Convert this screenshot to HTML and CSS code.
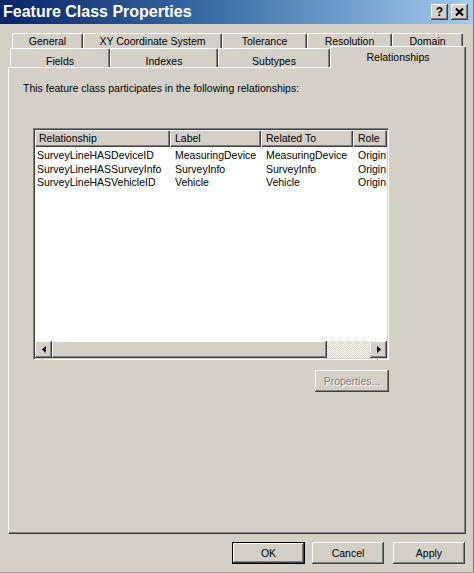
FILE: index.html
```html
<!DOCTYPE html>
<html>
<head>
<meta charset="utf-8">
<link rel="stylesheet" href="styles.css">
</head>
<body>
<div class="window">
  <div class="titlebar">
    <span class="title">Feature Class Properties</span>
    <div class="tbtns">
      <span class="tbtn help">?</span>
      <span class="tbtn close"><svg width="9" height="8" viewBox="0 0 9 8"><path d="M1 0.5 L8 7.5 M8 0.5 L1 7.5" stroke="#000" stroke-width="2" fill="none"/></svg></span>
    </div>
  </div>
  <div class="tabs">
    <div class="tabrow row1">
      <div class="tab t-general">General</div>
      <div class="tab t-xy">XY Coordinate System</div>
      <div class="tab t-tol">Tolerance</div>
      <div class="tab t-res">Resolution</div>
      <div class="tab t-dom">Domain</div>
    </div>
    <div class="tabrow row2">
      <div class="tab front t-fields">Fields</div>
      <div class="tab front t-idx">Indexes</div>
      <div class="tab front t-sub">Subtypes</div>
      <div class="tab selected t-rel">Relationships</div>
    </div>
  </div>
  <div class="panel">
    <p class="intro">This feature class participates in the following relationships:</p>
    <div class="listwrap">
      <div class="listview">
        <div class="lv-head">
          <div class="hcell c1">Relationship</div>
          <div class="hcell c2">Label</div>
          <div class="hcell c3">Related To</div>
          <div class="hcell c4">Role</div>
        </div>
        <div class="lv-body">
          <div class="lv-row">
            <div class="cell c1">SurveyLineHASDeviceID</div>
            <div class="cell c2">MeasuringDevice</div>
            <div class="cell c3">MeasuringDevice</div>
            <div class="cell c4">Origin</div>
          </div>
          <div class="lv-row">
            <div class="cell c1">SurveyLineHASSurveyInfo</div>
            <div class="cell c2">SurveyInfo</div>
            <div class="cell c3">SurveyInfo</div>
            <div class="cell c4">Origin</div>
          </div>
          <div class="lv-row">
            <div class="cell c1">SurveyLineHASVehicleID</div>
            <div class="cell c2">Vehicle</div>
            <div class="cell c3">Vehicle</div>
            <div class="cell c4">Origin</div>
          </div>
        </div>
        <div class="hscroll">
          <div class="sbtn"><svg width="4" height="7" viewBox="0 0 4 7"><path d="M4 0 L0 3.5 L4 7 Z" fill="#000"/></svg></div>
          <div class="thumb"></div>
          <div class="track"></div>
          <div class="sbtn"><svg width="4" height="7" viewBox="0 0 4 7"><path d="M0 0 L4 3.5 L0 7 Z" fill="#000"/></svg></div>
        </div>
      </div>
      <div class="props-row">
        <div class="btn disabled props">Properties...</div>
      </div>
    </div>
  </div>
  <div class="footer">
    <div class="btn default ok">OK</div>
    <div class="btn cancel">Cancel</div>
    <div class="btn apply">Apply</div>
  </div>
</div>
</body>
</html>
```
FILE: styles.css
```css
* { box-sizing: border-box; }
html, body { margin: 0; padding: 0; }
body {
  background: #d4d0c8;
  font-family: "Liberation Sans", Arial, sans-serif;
  font-size: 10.5px;
  color: #000;
}
.window {
  width: 474px;
  height: 573px;
  background: #d4d0c8;
  overflow: hidden;
  display: flex;
  flex-direction: column;
  border-right: 1px solid #808080;
  border-bottom: 1px solid #a0a0a0;
}
.titlebar {
  height: 24px;
  flex: none;
  background: linear-gradient(to right, #0a246a 0%, #3a6ea5 45%, #a6caf0 100%);
  display: flex;
  align-items: center;
  justify-content: space-between;
  padding: 0 5px 0 3px;
}
.title {
  color: #fff;
  font-weight: bold;
  font-size: 16px;
  line-height: 20px;
}
.tbtns { display: flex; gap: 3px; }
.tbtn {
  width: 17px;
  height: 16px;
  background: #d4d0c8;
  box-shadow: inset -1px -1px #404040, inset 1px 1px #fff, inset -2px -2px #808080;
  display: flex;
  align-items: center;
  justify-content: center;
  font-weight: bold;
  font-size: 12px;
  line-height: 16px;
}
.tabs {
  margin-top: 9px;
  flex: none;
}
.tabrow { display: flex; }
.row1 { height: 15px; padding-left: 12px; }
.row2 {
  height: 20px;
  padding-left: 10px;
  align-items: flex-end;
  margin-bottom: -1px;
}
.tab {
  background: #d4d0c8;
  border-top: 1px solid #fff;
  border-left: 1px solid #fff;
  border-right: 1px solid #404040;
  box-shadow: inset -1px 0 #808080;
  border-radius: 2px 2px 0 0;
  text-align: center;
  white-space: nowrap;
  line-height: 13px;
}
.row1 .tab { height: 15px; padding-top: 1px; }
.tab.front { height: 19px; margin-bottom: 1px; padding-top: 6px; }
.tab.selected { height: 22px; padding-top: 4px; position: relative; }
.t-general { width: 71px; }
.t-xy { width: 139px; }
.t-tol { width: 85px; }
.t-res { width: 85px; }
.t-dom { width: 71px; }
.t-fields { width: 100px; }
.t-idx { width: 108px; }
.t-sub { width: 112px; }
.t-rel { width: 136px; }
.panel {
  margin-left: 8px;
  width: 458px;
  height: 467px;
  flex: none;
  border-top: 1px solid #fff;
  border-left: 1px solid #fff;
  border-right: 1px solid #404040;
  border-bottom: 1px solid #404040;
  box-shadow: inset -1px -1px #808080;
}
.intro {
  margin: 14px 0 0 14px;
  line-height: 13px;
}
.listwrap {
  margin: 33px 0 0 24px;
  width: 356px;
}
.listview {
  width: 356px;
  height: 232px;
  background: #fff;
  border: 1px solid;
  border-color: #808080 #fff #fff #808080;
  box-shadow: inset 1px 1px #404040, inset -1px -1px #d4d0c8;
  padding: 1px;
  display: flex;
  flex-direction: column;
  overflow: hidden;
}
.lv-head {
  display: flex;
  height: 17px;
  flex: none;
  background: #d4d0c8;
}
.hcell {
  flex: none;
  height: 17px;
  line-height: 17px;
  padding-left: 5px;
  box-shadow: inset 1px 1px #fff, inset -1px -1px #404040, inset -2px -2px #808080;
  white-space: nowrap;
  overflow: hidden;
}
.c1 { width: 135px; }
.c2 { width: 91px; }
.c3 { width: 92px; }
.c4 { width: 34px; }
.hcell.c1 { padding-left: 4px; }
.lv-body {
  flex: 1;
  padding-top: 2px;
}
.lv-row {
  display: flex;
  height: 13.5px;
  line-height: 13.5px;
}
.cell {
  flex: none;
  padding-left: 5px;
  white-space: nowrap;
  overflow: hidden;
}
.cell.c1 { padding-left: 2px; }
.hscroll {
  display: flex;
  height: 17px;
  flex: none;
}
.sbtn {
  width: 17px;
  height: 17px;
  flex: none;
  background: #d4d0c8;
  box-shadow: inset -1px -1px #404040, inset 1px 1px #fff, inset -2px -2px #808080;
  display: flex;
  align-items: center;
  justify-content: center;
}
.thumb {
  width: 275px;
  flex: none;
  background: #d4d0c8;
  box-shadow: inset -1px -1px #404040, inset 1px 1px #fff, inset -2px -2px #808080;
}
.track {
  flex: 1;
  background: repeating-conic-gradient(#fff 0 25%, #d4d0c8 0 50%) 0 0 / 2px 2px;
}
.props-row {
  display: flex;
  justify-content: flex-end;
  margin-top: 10px;
}
.btn {
  height: 22px;
  line-height: 22px;
  text-align: center;
  background: #d4d0c8;
  box-shadow: inset -1px -1px #404040, inset 1px 1px #fff, inset -2px -2px #808080;
  white-space: nowrap;
}
.btn.props { width: 74px; }
.btn.disabled {
  color: #808080;
  text-shadow: 1px 1px 0 #fff;
}
.footer {
  display: flex;
  justify-content: flex-end;
  padding-right: 8px;
  margin-top: 8px;
}
.btn.ok { width: 73px; margin-right: 7px; }
.btn.cancel { width: 72px; margin-right: 9px; }
.btn.apply { width: 72px; }
.btn.default {
  border: 1px solid #000;
  line-height: 20px;
  box-shadow: inset -1px -1px #404040, inset 1px 1px #fff, inset -2px -2px #808080;
}
```
